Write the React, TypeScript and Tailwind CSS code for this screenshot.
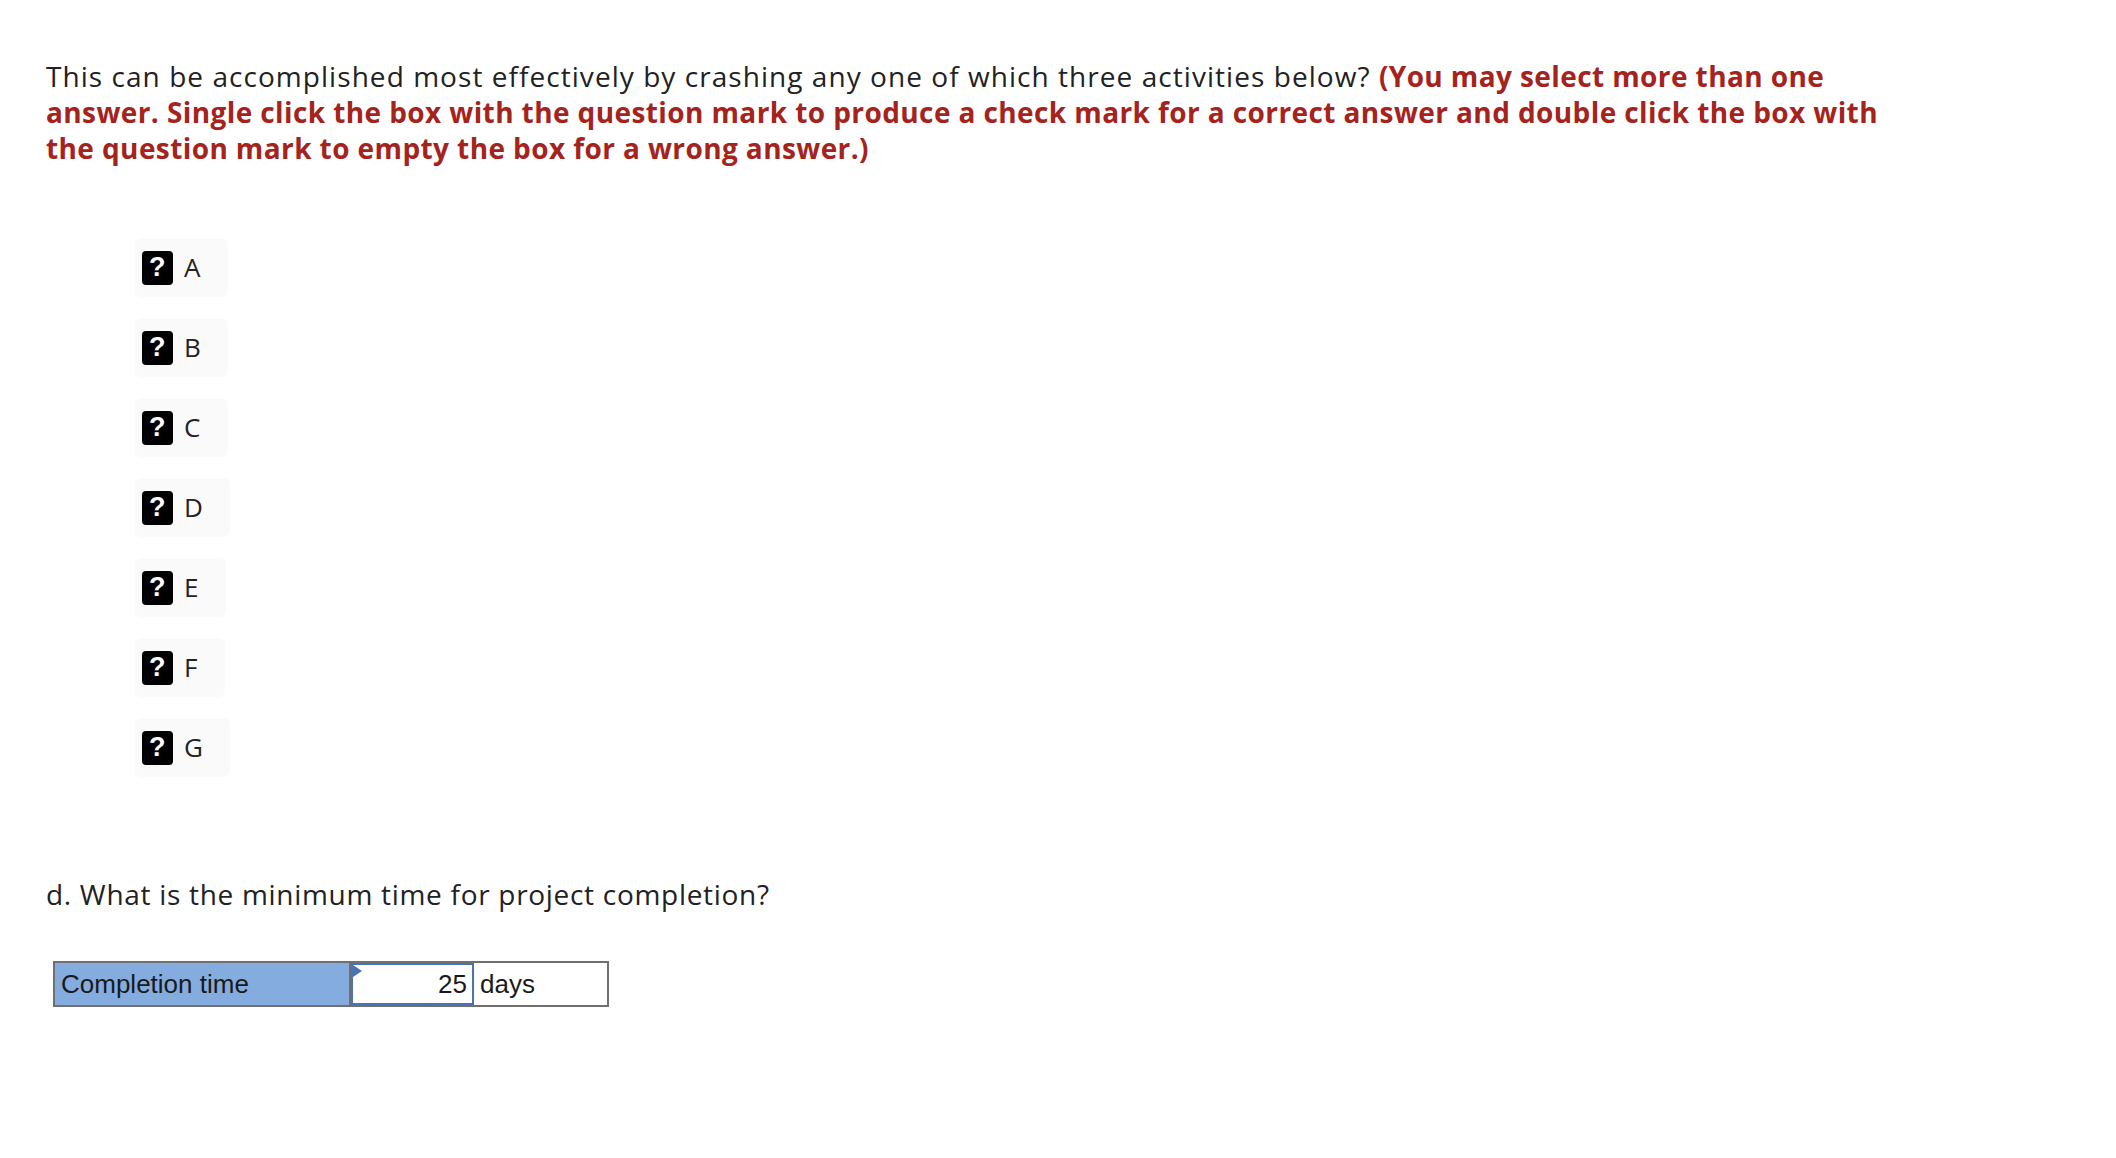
import React from 'react';

const options = ['A', 'B', 'C', 'D', 'E', 'F', 'G'];

const QuestionBox: React.FC = () => (
  <span className="flex h-[34px] w-[31px] items-center justify-center rounded-[4px] bg-black text-[27px] font-black leading-none text-white [font-family:'Liberation_Sans',Arial,sans-serif]">
    ?
  </span>
);

const OptionRow: React.FC<{ label: string }> = ({ label }) => (
  <button
    type="button"
    className="flex h-[59px] items-center gap-[11px] rounded-[7px] bg-[#fafafa] pl-[7px] pr-[27px] text-[26px] tracking-[0.5px] text-[#222]"
  >
    <QuestionBox />
    <span>{label}</span>
  </button>
);

export default function App() {
  return (
    <div className="min-h-screen bg-white pl-[46px] pt-[58px] text-[#222] [font-family:'Open_Sans','Noto_Sans',sans-serif]">
      <p className="whitespace-nowrap text-[28px] leading-[36px] tracking-[1.05px]">
        This can be accomplished most effectively by crashing any one of which three activities below?{' '}
        <span className="font-bold tracking-[0.4px] text-[#a5231d]">
          (You may select more than one
          <br />
          answer. Single click the box with the question mark to produce a check mark for a correct answer and double
          click the box with
          <br />
          the question mark to empty the box for a wrong answer.)
        </span>
      </p>

      <div className="mt-[72px] flex flex-col items-start gap-[21px] pl-[89px]">
        {options.map((o) => (
          <OptionRow key={o} label={o} />
        ))}
      </div>

      <p className="mt-[99px] text-[28px] leading-[36px] tracking-[0.7px]">
        d. What is the minimum time for project completion?
      </p>

      <div className="ml-[7px] mt-[49px] flex h-[46px] w-[556px] border-2 border-[#707070] text-[26px] text-[#1a1a1a] [font-family:'Liberation_Sans',Arial,sans-serif]">
        <div className="flex w-[296px] items-center border-r-2 border-[#707070] bg-[#84acdf] pl-[6px]">Completion time</div>
        <div className="relative flex w-[123px] items-center justify-end border-2 border-[#4a72b5] pr-[5px]">
          25
          <span className="absolute left-0 top-0 h-0 w-0 border-y-[6px] border-l-[9px] border-y-transparent border-l-[#4a72b5]" />
        </div>
        <div className="flex flex-1 items-center pl-[6px]">days</div>
      </div>
    </div>
  );
}
